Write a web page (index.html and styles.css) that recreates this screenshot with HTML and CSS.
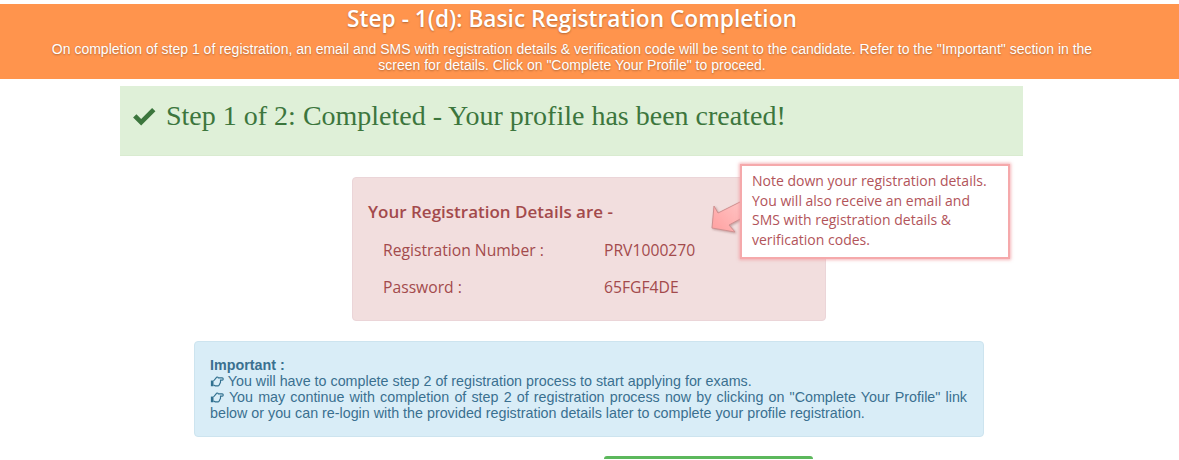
FILE: index.html
```html
<!DOCTYPE html>
<html lang="en">
  <head>
    <meta charset="UTF-8" />
    <title>Basic Registration Completion</title>
    <link rel="stylesheet" href="styles.css">
  </head>
  <body>
    <header class="banner">
      <h1>Step - 1(d): Basic Registration Completion</h1>
      <p>On completion of step 1 of registration, an email and SMS with registration details &amp; verification code will be sent to the candidate. Refer to the "Important" section in the screen for details. Click on "Complete Your Profile" to proceed.</p>
    </header>

    <div class="content">
      <div class="success">
        <svg class="check" viewBox="0 0 26 20" aria-hidden="true"><path d="M1 11 L4.5 7.5 L9.5 12.5 L21 1 L24.5 4.5 L9.5 19.5 Z" /></svg>
        <span>Step 1 of 2: Completed - Your profile has been created!</span>
      </div>

      <div class="details-wrap">
        <div class="details">
          <h2>Your Registration Details are -</h2>
          <div class="row"><span class="row-label">Registration Number :</span><span>PRV1000270</span></div>
          <div class="row"><span class="row-label">Password :</span><span>65FGF4DE</span></div>
        </div>

        <svg class="arrow" viewBox="0 0 32 38" aria-hidden="true">
          <defs>
            <linearGradient id="arrowFill" x1="0" y1="1" x2="1" y2="0">
              <stop offset="0" stop-color="#ff9f9f" />
              <stop offset="1" stop-color="#ffc6c6" />
            </linearGradient>
          </defs>
          <path d="M1 32 L3 10 L7 17 L31 5 L31 22 L18 29 L24 36 Z" fill="url(#arrowFill)" stroke="#cf9090" stroke-width="1" />
        </svg>

        <div class="note">Note down your registration details. You will also receive an email and SMS with registration details &amp; verification codes.</div>
      </div>

      <div class="important">
        <strong>Important :</strong>
        <div class="point">
          <svg class="hand" viewBox="0 0 16 13" aria-hidden="true"><rect class="cuff" x="1" y="6" width="3" height="6.5" /><path d="M4 6.5 L7 3 C7.5 1.5 9 1.5 9.5 3 H14 C15.5 3 15.5 5.5 14 5.5 H12 V8 L10.5 11 C10 12 9.5 12 9 12 H6 L4 11" /></svg>
          You will have to complete step 2 of registration process to start applying for exams.
        </div>
        <div class="point">
          <svg class="hand" viewBox="0 0 16 13" aria-hidden="true"><rect class="cuff" x="1" y="6" width="3" height="6.5" /><path d="M4 6.5 L7 3 C7.5 1.5 9 1.5 9.5 3 H14 C15.5 3 15.5 5.5 14 5.5 H12 V8 L10.5 11 C10 12 9.5 12 9 12 H6 L4 11" /></svg>
          You may continue with completion of step 2 of registration process now by clicking on "Complete Your Profile" link below or you can re-login with the provided registration details later to complete your profile registration.
        </div>
      </div>

      <div class="actions">
        <div class="btn-complete"></div>
      </div>
    </div>
  </body>
</html>
```

FILE: styles.css
```css
html, body {
  height: 100%;
  overflow: hidden;
}

body {
  margin: 0;
  padding-top: 4px;
  box-sizing: border-box;
  background-color: #fff;
  font-family: "Liberation Sans", Arial, sans-serif;
}

.banner {
  height: 75px;
  box-sizing: border-box;
  padding: 0 65px 0 30px;
  background-color: #ff944d;
  color: #fff;
  text-align: center;
  text-shadow: 0 1px 2px rgba(0, 0, 0, 0.3);
}

.banner h1 {
  margin: 0;
  font-family: "Open Sans", sans-serif;
  font-size: 22.7px;
  font-weight: 600;
  line-height: 30px;
}

.banner p {
  margin: 7px 0 0;
  font-size: 14px;
  line-height: 16px;
}

.content {
  width: 903px;
  margin: 7px 0 0 120px;
}

.success {
  display: flex;
  align-items: center;
  gap: 9px;
  height: 70px;
  box-sizing: border-box;
  padding: 0 12px 9px;
  background-color: #dff0d8;
  border-bottom: 1px solid #d9ebd0;
  color: #3c763d;
  font-family: "Liberation Serif", serif;
  font-size: 28px;
}

.check {
  width: 25px;
  height: 19px;
  fill: #3c763d;
}

.details-wrap {
  position: relative;
  margin: 21px 0 0 232px;
  width: 474px;
}

.details {
  height: 144px;
  box-sizing: border-box;
  padding: 24px 15px 0;
  background-color: #f2dede;
  border: 1px solid #ebd5d8;
  border-radius: 4px;
  color: #a34a4c;
  font-family: "Open Sans", sans-serif;
}

.details h2 {
  margin: 0 0 9px;
  font-size: 17px;
  font-weight: 600;
  line-height: 20px;
}

.row {
  display: flex;
  height: 37px;
  align-items: center;
  padding-left: 15px;
  font-size: 15.7px;
}

.row-label {
  width: 221px;
}

.arrow {
  position: absolute;
  top: 19px;
  left: 359px;
  width: 32px;
  height: 38px;
  filter: drop-shadow(1px 1px 1px rgba(120, 60, 60, 0.4));
}

.note {
  position: absolute;
  top: -13px;
  left: 388px;
  width: 270px;
  height: 95px;
  box-sizing: border-box;
  padding: 5px 10px;
  background-color: #fff;
  border: 2px solid #f5a9ab;
  box-shadow: 0 0 3px 1px rgba(240, 150, 155, 0.7);
  color: #b2545a;
  font-family: "Open Sans", sans-serif;
  font-size: 14px;
  line-height: 19.5px;
}

.important {
  width: 790px;
  height: 96px;
  box-sizing: border-box;
  margin: 20px 0 0 74px;
  padding: 15px 16px 0 15px;
  background-color: #d9edf7;
  border: 1px solid #cde4ef;
  border-radius: 4px;
  color: #3a7090;
  font-size: 14.3px;
  line-height: 16px;
}

.important strong {
  display: block;
}

.point {
  text-align: justify;
}

.hand {
  width: 14px;
  height: 12px;
  vertical-align: -1px;
  fill: none;
  stroke: #31708f;
  stroke-width: 1.3;
}

.hand .cuff {
  fill: #31708f;
  stroke: none;
}

.actions {
  display: flex;
  margin: 19px 0 0 484px;
}

.btn-complete {
  width: 209px;
  height: 3px;
  background-color: #5cb85c;
  border-radius: 4px 4px 0 0;
}
```
